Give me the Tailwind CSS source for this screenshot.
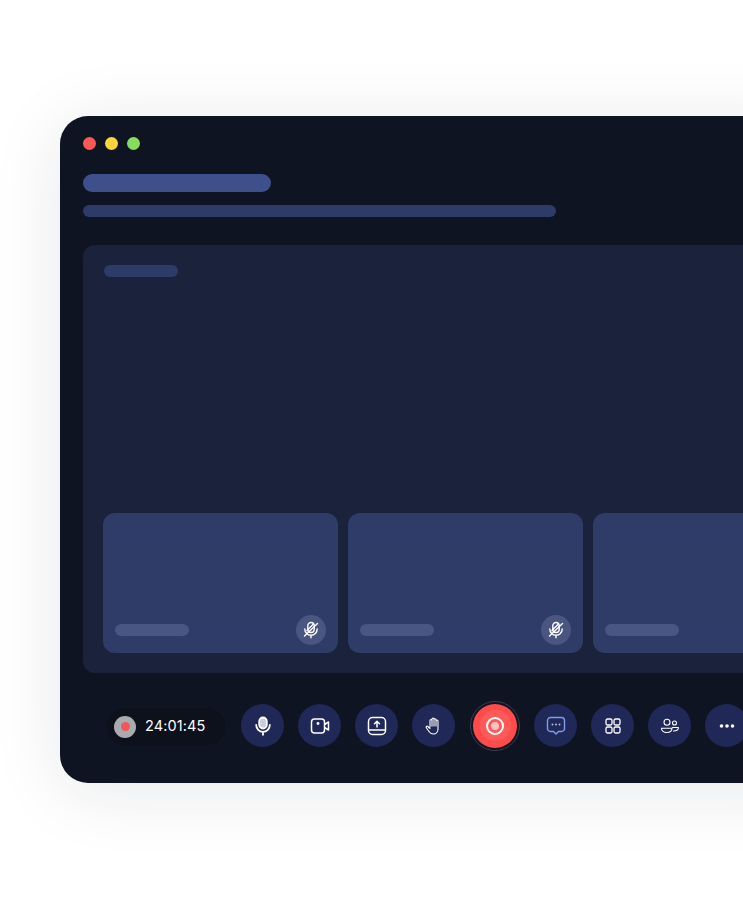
<!DOCTYPE html>
<html>
<head>
<meta charset="utf-8">
<script src="https://cdn.jsdelivr.net/npm/@tailwindcss/browser@4"></script>
</head>
<body class="bg-white overflow-hidden font-['Inter',sans-serif]">
<div class="w-[743px] h-[900px] overflow-hidden pt-[116px] pl-[60px]">
  <div class="w-[760px] h-[667px] rounded-[28px] bg-[#0e1421] shadow-[0_8px_70px_rgba(20,25,45,0.1)] overflow-hidden flex flex-col">
    <div class="flex gap-[9.7px] pl-[23px] pt-[21px]">
      <span class="w-[12.5px] h-[12.5px] rounded-full bg-[#ff5a52]"></span>
      <span class="w-[12.5px] h-[12.5px] rounded-full bg-[#fdd33f]"></span>
      <span class="w-[12.5px] h-[12.5px] rounded-full bg-[#86dc5b]"></span>
    </div>
    <div class="ml-[23px] mt-[24px] w-[188px] h-[18px] rounded-[9px] bg-[#3f4f8c]"></div>
    <div class="ml-[23px] mt-[13px] w-[472.500px] h-[12px] rounded-[6px] bg-[#2e3b68]"></div>
    <div class="ml-[23px] mt-[28px] h-[428px] w-[737px] shrink-0 rounded-[12px] bg-[#1b233c] pt-[20px] pl-[20px] flex flex-col">
      <div class="ml-[1px] w-[74px] h-[12px] rounded-[6px] bg-[#2e3b68]"></div>
      <div class="mt-[236px] flex gap-[10px]">
        <div class="relative w-[235px] h-[140px] shrink-0 rounded-[12px] bg-[#303c68] flex items-end justify-between pl-[12px] pr-[12px] pb-[8px]">
          <div class="w-[74px] h-[12px] mb-[9px] rounded-[6px] bg-[#4a5580]"></div>
          <div class="w-[30px] h-[30px] rounded-full bg-[#4a5580] flex items-center justify-center">
            <svg width="18" height="18" viewBox="0 0 18 18" fill="none" stroke="#fff" stroke-width="1.400" stroke-linecap="round"><rect x="5.800" y="1.500" width="6.400" height="10" rx="3.200"/><path d="M2.800 8a6.200 6.200 0 0 0 12.400 0M9 14.200v2.500M2.500 15 15.500 2.500M5 9.500 11 3.500"/></svg>
          </div>
        </div>
        <div class="relative w-[235px] h-[140px] shrink-0 rounded-[12px] bg-[#303c68] flex items-end justify-between pl-[12px] pr-[12px] pb-[8px]">
          <div class="w-[74px] h-[12px] mb-[9px] rounded-[6px] bg-[#4a5580]"></div>
          <div class="w-[30px] h-[30px] rounded-full bg-[#4a5580] flex items-center justify-center">
            <svg width="18" height="18" viewBox="0 0 18 18" fill="none" stroke="#fff" stroke-width="1.400" stroke-linecap="round"><rect x="5.800" y="1.500" width="6.400" height="10" rx="3.200"/><path d="M2.800 8a6.200 6.200 0 0 0 12.400 0M9 14.200v2.500M2.500 15 15.500 2.500M5 9.500 11 3.500"/></svg>
          </div>
        </div>
        <div class="relative w-[235px] h-[140px] shrink-0 rounded-[12px] bg-[#303c68] flex items-end justify-between pl-[12px] pr-[12px] pb-[8px]">
          <div class="w-[74px] h-[12px] mb-[9px] rounded-[6px] bg-[#4a5580]"></div>
        </div>
      </div>
    </div>
    <div class="flex items-center ml-[47px] mt-[28px] w-[720px] h-[50px] shrink-0">
      <div class="w-[118px] h-[37px] shrink-0 mt-[2px] rounded-full bg-[#0c111c] flex items-center pl-[7px] mr-[16px]">
        <span class="w-[22px] h-[22px] rounded-full bg-[#a9abaf] flex items-center justify-center"><span class="w-[9px] h-[9px] rounded-full bg-[#f2565a]"></span></span>
        <span class="ml-[9px] text-[14.5px] text-white leading-none tracking-[0.1px]">24:01:45</span>
      </div>
      <div class="flex gap-[14px]">
        <div class="w-[43px] h-[43px] rounded-full bg-[#1f2857] flex items-center justify-center">
          <svg width="20" height="20" viewBox="0 0 20 20" fill="none" stroke="#fff" stroke-width="1.800" stroke-linecap="round"><rect x="6.200" y="1.500" width="7.600" height="11" rx="3.800" fill="#c9cede" stroke="#fff"/><path d="M3.200 9a6.800 6.800 0 0 0 13.600 0M10 15.800v3"/></svg>
        </div>
        <div class="w-[43px] h-[43px] rounded-full bg-[#1f2857] flex items-center justify-center">
          <svg width="20" height="20" viewBox="0 0 20 20" fill="none" stroke="#fff" stroke-width="1.500" stroke-linejoin="round"><rect x="1.500" y="3" width="13" height="14" rx="3"/><path d="m14.500 8.500 4-2.500v8l-4-2.500"/><circle cx="8" cy="7.500" r="1.400" fill="#fff" stroke="none"/></svg>
        </div>
        <div class="w-[43px] h-[43px] rounded-full bg-[#1f2857] flex items-center justify-center">
          <svg width="20" height="20" viewBox="0 0 20 20" fill="none" stroke="#fff" stroke-width="1.500" stroke-linecap="round" stroke-linejoin="round"><rect x="1.500" y="1.500" width="17" height="17" rx="4"/><path d="M10 11V5.500M7.500 7.800 10 5.300l2.500 2.500"/><path d="M1.800 14h16.400" stroke-width="1.300"/></svg>
        </div>
        <div class="w-[43px] h-[43px] rounded-full bg-[#1f2857] flex items-center justify-center">
          <svg width="20" height="20" viewBox="0 0 20 20" fill="none" stroke="#fff" stroke-width="1.100" stroke-linecap="round" stroke-linejoin="round"><path d="M6 11V4.500a1 1 0 0 1 2 0V3a1 1 0 0 1 2 0v.8a1 1 0 0 1 2 0V5a1 1 0 0 1 2 0v8c0 3-2 5-4.500 5-2.200 0-3.500-1-4.500-2.500L2.300 11.800c-.7-1 .6-2.100 1.500-1.300L6 12.500M8 4.500V10M10 3.500V10M12 4V10"/></svg>
        </div>
      </div>
      <div class="ml-[15px] w-[50px] h-[50px] shrink-0 rounded-full border-[1.500px] border-[#3a3e4a] flex items-center justify-center">
        <div class="w-[44px] h-[44px] rounded-full bg-[#ff4b4b] flex items-center justify-center">
          <div class="w-[31px] h-[31px] rounded-full bg-[#ff5a5a] flex items-center justify-center">
            <div class="w-[18px] h-[18px] rounded-full border-[2px] border-white flex items-center justify-center"><span class="w-[8px] h-[8px] rounded-full bg-[#ffc0c0]"></span></div>
          </div>
        </div>
      </div>
      <div class="ml-[14px] flex gap-[14px]">
        <div class="w-[43px] h-[43px] rounded-full bg-[#1f2857] flex items-center justify-center">
          <svg width="20" height="20" viewBox="0 0 20 20" fill="none" stroke="#7f9df0" stroke-width="1.400" stroke-linejoin="round"><path d="M4.500 1.500h11a3 3 0 0 1 3 3v8a3 3 0 0 1-3 3h-3L10 18l-2.500-2.500h-3a3 3 0 0 1-3-3v-8a3 3 0 0 1 3-3Z"/><g fill="#a9bdf5" stroke="none"><circle cx="6.500" cy="8.500" r="1"/><circle cx="10" cy="8.500" r="1"/><circle cx="13.500" cy="8.500" r="1"/></g></svg>
        </div>
        <div class="w-[43px] h-[43px] rounded-full bg-[#1f2857] flex items-center justify-center">
          <svg width="20" height="20" viewBox="0 0 20 20" fill="none" stroke="#fff" stroke-width="1.300"><rect x="3" y="3" width="6" height="6" rx="1.500"/><rect x="11" y="3" width="6" height="6" rx="1.500"/><rect x="3" y="11" width="6" height="6" rx="1.500"/><rect x="11" y="11" width="6" height="6" rx="1.500"/></svg>
        </div>
        <div class="w-[43px] h-[43px] rounded-full bg-[#1f2857] flex items-center justify-center">
          <svg width="20" height="20" viewBox="0 0 20 20" fill="none" stroke="#fff" stroke-width="1.100" stroke-linecap="round"><circle cx="7" cy="6.300" r="3"/><circle cx="14.500" cy="7" r="2"/><path d="M1.500 12.300h10.500c0 2.700-2 4.200-5.200 4.200s-5.300-1.500-5.300-4.200ZM12.500 11.500h5.800c.5 2-1.500 3.500-4.800 3.500"/></svg>
        </div>
        <div class="w-[43px] h-[43px] rounded-full bg-[#1f2857] flex items-center justify-center">
          <svg width="20" height="20" viewBox="0 0 20 20" fill="#fff"><circle cx="4.500" cy="10" r="1.800"/><circle cx="10" cy="10" r="1.800"/><circle cx="15.500" cy="10" r="1.800"/></svg>
        </div>
      </div>
    </div>
  </div>
</div>
</body>
</html>
